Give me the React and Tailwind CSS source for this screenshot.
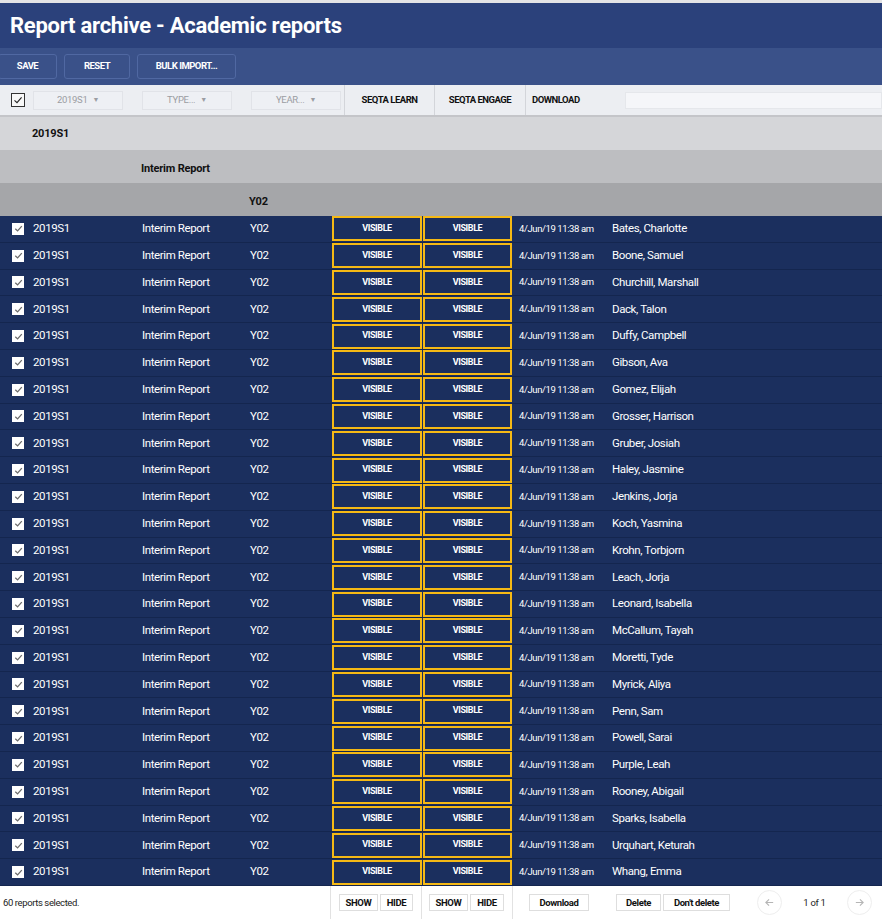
import React from "react";

const names = [
  "Bates, Charlotte","Boone, Samuel","Churchill, Marshall","Dack, Talon","Duffy, Campbell","Gibson, Ava","Gomez, Elijah","Grosser, Harrison","Gruber, Josiah","Haley, Jasmine","Jenkins, Jorja","Koch, Yasmina","Krohn, Torbjorn","Leach, Jorja","Leonard, Isabella","McCallum, Tayah","Moretti, Tyde","Myrick, Aliya","Penn, Sam","Powell, Sarai","Purple, Leah","Rooney, Abigail","Sparks, Isabella","Urquhart, Keturah","Whang, Emma",
];

const font = { fontFamily: "Roboto, 'Liberation Sans', sans-serif" };

function Check({ className = "", stroke = "#666", sw = 1.6 }) {
  return (
    <svg viewBox="0 0 12 12" className={className}>
      <polyline points="2.5,6.3 5,8.6 9.6,3.4" fill="none" stroke={stroke} strokeWidth={sw} />
    </svg>
  );
}

function Dropdown({ label }) {
  return (
    <div className="w-[90px] h-[19px] border border-[#e1e3e8] bg-[#eef0f4] flex items-center justify-center gap-[5px] text-[9.5px] tracking-[-0.3px] text-[#9b9da2]">
      <span>{label}</span>
      <span className="text-[7px] leading-none">▼</span>
    </div>
  );
}

function Row({ name }) {
  return (
    <div className="flex items-center h-[26.8px] bg-[#1b2f5e] border-b border-[#14264f] text-white text-[11.5px] tracking-[-0.4px]">
      <div className="w-[33px] pl-[12px] flex items-center">
        <div className="w-[12px] h-[12px] bg-white flex items-center justify-center">
          <Check className="w-[11px] h-[11px]" stroke="#6b6b6b" sw={1.4} />
        </div>
      </div>
      <div className="w-[109px]">2019S1</div>
      <div className="w-[108px]">Interim Report</div>
      <div className="w-[82px]">Y02</div>
      <div className="w-[90px] h-[25px] border-2 border-[#f5b915] flex items-center justify-center text-[9px] font-bold tracking-[-0.4px]">VISIBLE</div>
      <div className="w-[1px]" />
      <div className="w-[89px] h-[25px] border-2 border-[#f5b915] flex items-center justify-center text-[9px] font-bold tracking-[-0.4px]">VISIBLE</div>
      <div className="w-[100px] pl-[7px] text-[9.5px] tracking-[-0.4px]">4/Jun/19 11:38 am</div>
      <div className="flex-1">{name}</div>
    </div>
  );
}

function FootBtn({ children, w }) {
  return (
    <div className={`h-[17px] border border-[#dedede] bg-white flex items-center justify-center text-[9.5px] font-bold text-[#111] tracking-[-0.4px] ${w}`}>
      {children}
    </div>
  );
}

export default function App() {
  return (
    <div className="w-[882px] h-[919px] overflow-hidden bg-white" style={font}>
      <div className="h-[3px] bg-[#e4e4e6]" />
      <div className="h-[45px] bg-[#2b417b] flex items-center pl-[10px]">
        <h1 className="text-white text-[22px] font-bold tracking-[-0.25px]">Report archive - Academic reports</h1>
      </div>
      <div className="h-[37px] bg-[#3a5189] flex items-center gap-[7px]">
        <div className="ml-[-2px] w-[59px] h-[25px] border border-[#5068a2] rounded-[3px] flex items-center justify-center text-white text-[9.5px] font-bold tracking-[-0.5px]">SAVE</div>
        <div className="w-[66px] h-[25px] border border-[#5068a2] rounded-[3px] flex items-center justify-center text-white text-[9.5px] font-bold tracking-[-0.5px]">RESET</div>
        <div className="w-[99px] h-[25px] border border-[#5068a2] rounded-[3px] flex items-center justify-center text-white text-[9.5px] font-bold tracking-[-0.5px]">BULK IMPORT...</div>
      </div>
      <div className="h-[32px] bg-[#eceef2] flex items-stretch border-b-2 border-[#c4c5c9]">
        <div className="w-[33px] flex items-center pl-[11px]">
          <div className="w-[14px] h-[14px] border border-[#333] bg-[#f8f8f8] flex items-center justify-center">
            <Check className="w-[12px] h-[12px]" stroke="#222" sw={1.1} />
          </div>
        </div>
        <div className="w-[109px] flex items-center"><Dropdown label="2019S1" /></div>
        <div className="w-[109px] flex items-center"><Dropdown label="TYPE..." /></div>
        <div className="w-[93px] flex items-center"><Dropdown label="YEAR..." /></div>
        <div className="w-[90px] border-l border-[#d3d5da] flex items-center justify-center text-[9.5px] font-bold text-[#111] tracking-[-0.5px]">SEQTA LEARN</div>
        <div className="w-[91px] border-l border-[#d3d5da] flex items-center justify-center text-[9.5px] font-bold text-[#111] tracking-[-0.5px]">SEQTA ENGAGE</div>
        <div className="w-[100px] border-l border-[#d3d5da] flex items-center pl-[6px] text-[9.5px] font-bold text-[#111] tracking-[-0.5px]">DOWNLOAD</div>
        <div className="flex-1 flex items-center">
          <div className="w-full h-[17px] bg-[#f5f6f9] border border-[#e5e7eb]" />
        </div>
      </div>
      <div className="h-[33px] bg-[#d5d6d9] flex items-center pt-[2px] pl-[32px] text-[11px] font-bold text-[#111] tracking-[-0.2px]">2019S1</div>
      <div className="h-[33px] bg-[#bdbec1] flex items-center pt-[5px] pl-[141px] text-[11px] font-bold text-[#111] tracking-[-0.2px]">Interim Report</div>
      <div className="h-[33px] bg-[#a5a6a9] flex items-center pt-[5px] pl-[249px] text-[11px] font-bold text-[#111] tracking-[-0.2px]">Y02</div>
      <div>
        {names.map((n) => (
          <Row key={n} name={n} />
        ))}
      </div>
      <div className="h-[34px] flex items-stretch">
        <div className="w-[330px] flex items-center pl-[3px] text-[9.5px] tracking-[-0.4px] text-[#222]">60 reports selected.</div>
        <div className="w-[91px] border-l border-[#e2e2e2] flex items-center pl-[8px] gap-[2px]">
          <FootBtn w="w-[39px]">SHOW</FootBtn>
          <FootBtn w="w-[33px]">HIDE</FootBtn>
        </div>
        <div className="w-[91px] border-l border-[#e2e2e2] flex items-center pl-[7px] gap-[2px]">
          <FootBtn w="w-[39px]">SHOW</FootBtn>
          <FootBtn w="w-[34px]">HIDE</FootBtn>
        </div>
        <div className="flex-1 border-l border-[#e2e2e2] flex items-center">
          <div className="ml-[16px]"><FootBtn w="w-[60px]">Download</FootBtn></div>
          <div className="ml-[27px]"><FootBtn w="w-[45px]">Delete</FootBtn></div>
          <div className="ml-[2px]"><FootBtn w="w-[67px]">Don't delete</FootBtn></div>
          <div className="ml-[27px] w-[25px] h-[25px] rounded-full border border-[#eeeeee] flex items-center justify-center">
            <svg viewBox="0 0 12 12" className="w-[11px] h-[11px]"><path d="M10 6H2M5.5 2.5L2 6l3.5 3.5" fill="none" stroke="#b5b5b5" strokeWidth="1.2" /></svg>
          </div>
          <div className="w-[65px] text-center text-[9.5px] tracking-[-0.3px] text-[#222]">1 of 1</div>
          <div className="w-[25px] h-[25px] rounded-full border border-[#eeeeee] flex items-center justify-center">
            <svg viewBox="0 0 12 12" className="w-[11px] h-[11px]"><path d="M2 6h8M6.5 2.5L10 6l-3.5 3.5" fill="none" stroke="#b5b5b5" strokeWidth="1.2" /></svg>
          </div>
        </div>
      </div>
    </div>
  );
}
